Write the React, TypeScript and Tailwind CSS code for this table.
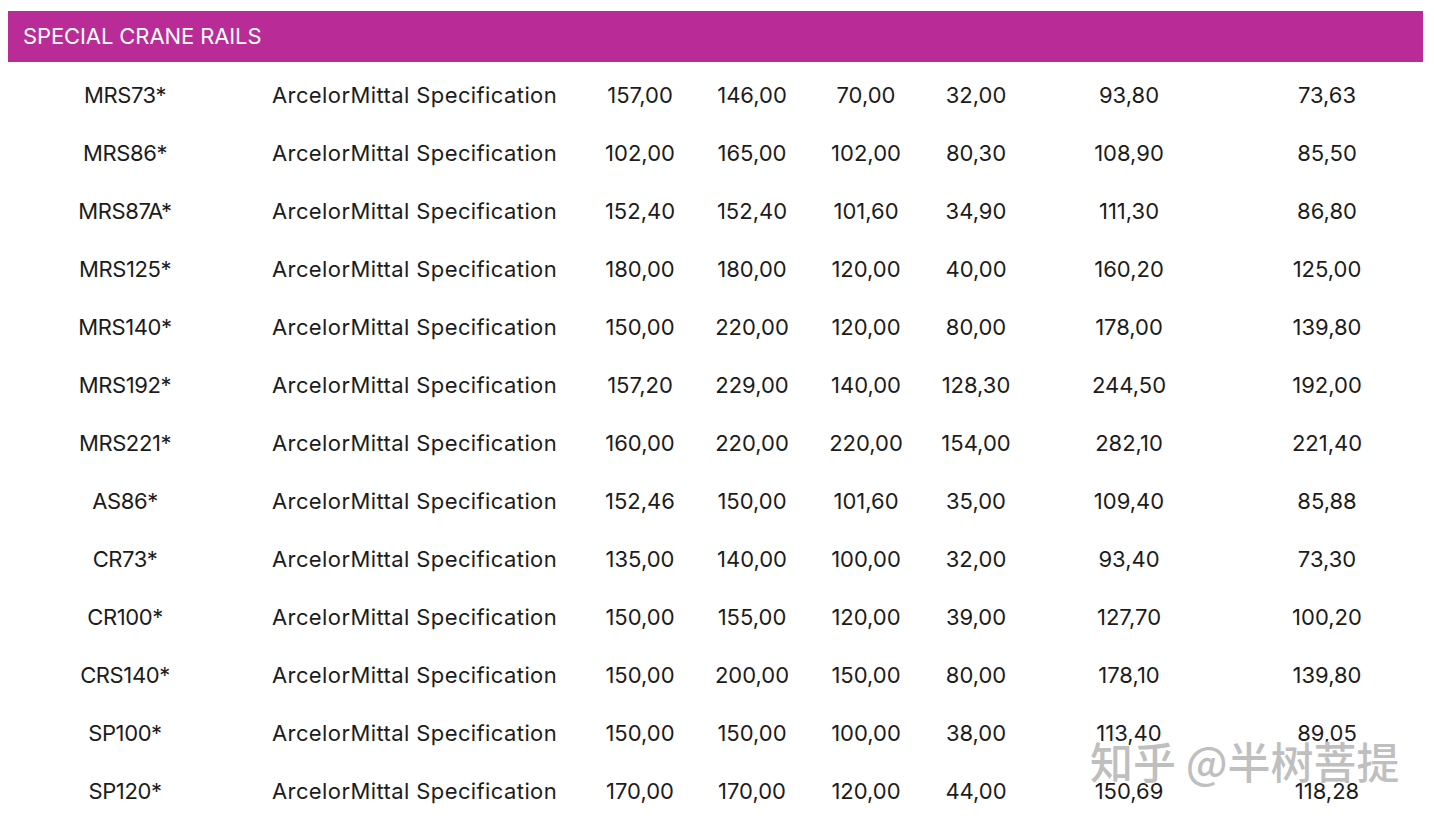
const rows: string[][] = [
  ['MRS73*', '157,00', '146,00', '70,00', '32,00', '93,80', '73,63'],
  ['MRS86*', '102,00', '165,00', '102,00', '80,30', '108,90', '85,50'],
  ['MRS87A*', '152,40', '152,40', '101,60', '34,90', '111,30', '86,80'],
  ['MRS125*', '180,00', '180,00', '120,00', '40,00', '160,20', '125,00'],
  ['MRS140*', '150,00', '220,00', '120,00', '80,00', '178,00', '139,80'],
  ['MRS192*', '157,20', '229,00', '140,00', '128,30', '244,50', '192,00'],
  ['MRS221*', '160,00', '220,00', '220,00', '154,00', '282,10', '221,40'],
  ['AS86*', '152,46', '150,00', '101,60', '35,00', '109,40', '85,88'],
  ['CR73*', '135,00', '140,00', '100,00', '32,00', '93,40', '73,30'],
  ['CR100*', '150,00', '155,00', '120,00', '39,00', '127,70', '100,20'],
  ['CRS140*', '150,00', '200,00', '150,00', '80,00', '178,10', '139,80'],
  ['SP100*', '150,00', '150,00', '100,00', '38,00', '113,40', '89,05'],
  ['SP120*', '170,00', '170,00', '120,00', '44,00', '150,69', '118,28'],
];

export default function App() {
  return (
    <div className="relative w-[1434px] h-[823px] overflow-hidden bg-white pt-[11px] pl-2 text-[#1c1c1c] font-['Inter',sans-serif]">
      {/* section header */}
      <div className="w-[1415px] h-[51px] bg-[#b92b96] flex items-center pl-[15px] text-white text-[22px] tracking-[-0.1px]">
        SPECIAL CRANE RAILS
      </div>

      {/* table body */}
      <div className="mt-1 grid grid-cols-[234px_342px_112px_112px_116px_104px_202px_194px] text-[22px]">
        {rows.map((r) => (
          <div key={r[0]} className="contents">
            <div className="h-[58px] flex items-center justify-center tracking-[-0.4px]">{r[0]}</div>
            <div className="h-[58px] flex items-center pl-[30px] tracking-[0.4px]">ArcelorMittal Specification</div>
            {r.slice(1).map((v, i) => (
              <div key={i} className="h-[58px] flex items-center justify-center">{v}</div>
            ))}
          </div>
        ))}
      </div>

      {/* watermark */}
      <div className="absolute left-[1090px] top-[739px] text-[43px] leading-none font-medium text-[#b4b4b4]/85 font-['Noto_Sans_CJK_SC',sans-serif] [text-shadow:0_0_2px_#fff,0_0_1px_#fff]">
        知乎 @半树菩提
      </div>
    </div>
  );
}
